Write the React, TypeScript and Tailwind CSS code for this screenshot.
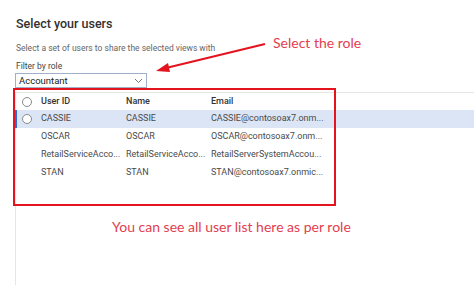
import React from "react"

const rows = [
  { id: "CASSIE", name: "CASSIE", email: "CASSIE@contosoax7.onm...", selected: true },
  { id: "OSCAR", name: "OSCAR", email: "OSCAR@contosoax7.onm..." },
  { id: "RetailServiceAcco...", name: "RetailServiceAcco...", email: "RetailServerSystemAccou..." },
  { id: "STAN", name: "STAN", email: "STAN@contosoax7.onmic..." },
]

function Radio() {
  return <span className="block h-[10px] w-[10px] rounded-full border border-[#8a8a8a] bg-white" />
}

export default function App() {
  return (
    <div
      className="relative h-[285px] w-[474px] overflow-hidden bg-white text-[#333]"
      style={{ fontFamily: 'Roboto, "Noto Sans", sans-serif' }}
    >
      <div className="pl-4 pt-[14px]">
        <h1 className="text-[12.5px] font-medium leading-5 text-[#323130]">Select your users</h1>
        <p className="mt-[8px] text-[8.5px] leading-3 text-[#666]">
          Select a set of users to share the selected views with
        </p>
        <div className="mt-[6px] text-[8.5px] leading-3 text-[#444]">Filter by role</div>
        <div className="-ml-px mt-[1px] flex h-[15px] w-[132px] items-center justify-between border border-[#9fb0c8] pl-[3px] pr-[3px]">
          <span className="text-[9.5px] leading-3 text-[#222]">Accountant</span>
          <svg width="9" height="6" viewBox="0 0 9 6" fill="none">
            <path d="M1 1l3.5 3.5L8 1" stroke="#777" strokeWidth="1" />
          </svg>
        </div>
      </div>

      {/* table */}
      <div className="ml-[15px] mt-[4px] h-[200px] border-l border-t border-[#e6e6e6] text-[9px]">
        <div className="flex h-[17px] items-center font-medium text-[#333]">
          <div className="flex w-[25px] pl-[6px]"><Radio /></div>
          <div className="w-[85px]">User ID</div>
          <div className="w-[85px]">Name</div>
          <div>Email</div>
        </div>
        {rows.map((r) => (
          <div
            key={r.id}
            className={[
              "flex h-[18px] items-center text-[#4a4a4a]",
              r.selected ? "-ml-px border-l-2 border-[#2b6cd6] bg-[#dbe5f6]" : "",
            ].join(" ")}
          >
            <div className={["flex", r.selected ? "w-[24px] pl-[5px]" : "w-[25px] pl-[6px]"].join(" ")}>
              {r.selected && <Radio />}
            </div>
            <div className="w-[85px] whitespace-nowrap">{r.id}</div>
            <div className="w-[85px] whitespace-nowrap">{r.name}</div>
            <div className="whitespace-nowrap">{r.email}</div>
          </div>
        ))}
      </div>

      {/* annotations */}
      <div className="pointer-events-none absolute left-[13px] top-[88px] h-[118px] w-[323px] border-2 border-[#e3141e]" />
      <svg className="pointer-events-none absolute left-0 top-0" width="474" height="285">
        <line x1="265" y1="44" x2="166" y2="68" stroke="#e3141e" strokeWidth="2" />
        <path d="M156 71 L168 63 L170 72 Z" fill="#e3141e" />
      </svg>
      <div
        className="absolute left-[273px] top-[33px] text-[14px] leading-5 text-[#e2404f]"
        style={{ fontFamily: 'Lato, "Liberation Sans", sans-serif' }}
      >
        Select the role
      </div>
      <div
        className="absolute left-[112px] top-[217px] text-[14px] leading-5 text-[#e2404f]"
        style={{ fontFamily: 'Lato, "Liberation Sans", sans-serif' }}
      >
        You can see all user list here as per role
      </div>
    </div>
  )
}
